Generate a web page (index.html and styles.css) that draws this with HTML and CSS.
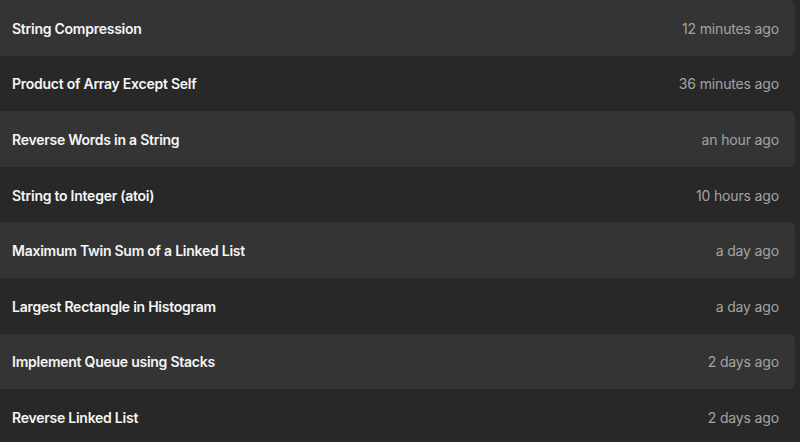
FILE: index.html
```html
<!DOCTYPE html>
<html lang="en">
<head>
    <meta charset="UTF-8">
    <meta name="viewport" content="width=device-width, initial-scale=1.0">
    <title>Recent submissions</title>
    <link rel="stylesheet" href="styles.css">
</head>
<body>
    <div class="list">
        <div class="row light">
            <span class="title">String Compression</span>
            <span class="time">12 minutes ago</span>
        </div>
        <div class="row">
            <span class="title">Product of Array Except Self</span>
            <span class="time">36 minutes ago</span>
        </div>
        <div class="row light">
            <span class="title">Reverse Words in a String</span>
            <span class="time">an hour ago</span>
        </div>
        <div class="row">
            <span class="title">String to Integer (atoi)</span>
            <span class="time">10 hours ago</span>
        </div>
        <div class="row light">
            <span class="title">Maximum Twin Sum of a Linked List</span>
            <span class="time">a day ago</span>
        </div>
        <div class="row">
            <span class="title">Largest Rectangle in Histogram</span>
            <span class="time">a day ago</span>
        </div>
        <div class="row light">
            <span class="title">Implement Queue using Stacks</span>
            <span class="time">2 days ago</span>
        </div>
        <div class="row">
            <span class="title">Reverse Linked List</span>
            <span class="time">2 days ago</span>
        </div>
    </div>
</body>
</html>
```

FILE: styles.css
```css
html, body {
    margin: 0;
    padding: 0;
    background: #282828;
    overflow: hidden;
}
body {
    font-family: Inter, "Noto Sans", sans-serif;
    font-size: 14px;
    color: #fff;
}
.list {
    display: flex;
    flex-direction: column;
    margin: 0 5px 0 -6px;
}
.row {
    display: flex;
    align-items: center;
    justify-content: space-between;
    height: 55.6px;
    padding: 1px 16px 0 18px;
    box-sizing: border-box;
    border-radius: 6px;
}
.row.light {
    background: #343434;
}
.title {
    font-weight: 600;
    color: #f5f5f5;
    letter-spacing: -0.25px;
}
.time {
    color: #a3a3a3;
    letter-spacing: -0.15px;
}
```
